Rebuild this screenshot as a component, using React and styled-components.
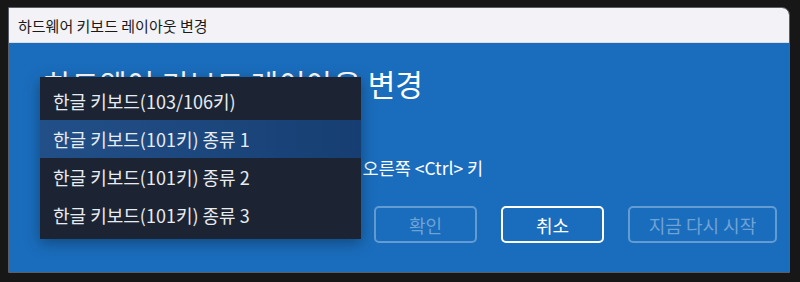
import React from "react";
import styled, { createGlobalStyle } from "styled-components";

const GlobalStyle = createGlobalStyle`
    html, body {
        margin: 0;
        padding: 0;
        background: #171717;
        font-family: "Noto Sans CJK KR", "Noto Sans", sans-serif;
    }
`;

const options = [
    "한글 키보드(103/106키)",
    "한글 키보드(101키) 종류 1",
    "한글 키보드(101키) 종류 2",
    "한글 키보드(101키) 종류 3",
];

const App = () => {
    return (
        <Page>
            <GlobalStyle />
            <Window>
                <TitleBar>하드웨어 키보드 레이아웃 변경</TitleBar>
                <Body>
                    <Heading>하드웨어 키보드 레이아웃 변경</Heading>
                    <InfoLine>한/영 키: 오른쪽 &lt;Alt&gt; 키, 한자 키: 오른쪽 &lt;Ctrl&gt; 키</InfoLine>
                    <Buttons>
                        <DialogButton disabled>확인</DialogButton>
                        <DialogButton primary>취소</DialogButton>
                        <DialogButton disabled wide>지금 다시 시작</DialogButton>
                    </Buttons>
                    <Popup>
                        {options.map((label, i) => (
                            <Option key={label} selected={i === 1}>{label}</Option>
                        ))}
                    </Popup>
                </Body>
            </Window>
        </Page>
    );
};

const Page = styled.div`
    width: 800px;
    height: 282px;
    padding: 7px 10px 9px 8px;
    box-sizing: border-box;
    background: #171717;
`;

const Window = styled.div`
    height: 100%;
    display: flex;
    flex-direction: column;
    border: 1px solid #5a5f66;
    border-radius: 0 8px 0 0;
    overflow: hidden;
    box-sizing: border-box;
`;

const TitleBar = styled.div`
    height: 34px;
    flex-shrink: 0;
    display: flex;
    align-items: center;
    padding-left: 9px;
    background: #f2f2f7;
    border-bottom: 1px solid #dcdde4;
    color: #1a1a1a;
    font-size: 15px;
`;

const Body = styled.div`
    position: relative;
    flex: 1;
    display: flex;
    flex-direction: column;
    padding: 20px 12px 0 35px;
    background: #1a6dbd;
    color: #ffffff;
`;

const Heading = styled.div`
    font-size: 30px;
    line-height: 40px;
`;

const InfoLine = styled.div`
    margin-top: 53px;
    padding-left: 67px;
    font-size: 17.5px;
    line-height: 24px;
`;

const Buttons = styled.div`
    display: flex;
    justify-content: flex-end;
    gap: 24px;
    margin-top: 26px;
`;

const DialogButton = styled.div`
    width: ${p => (p.wide ? "145px" : "99px")};
    height: 33px;
    display: flex;
    align-items: center;
    justify-content: center;
    border: 2px solid ${p => (p.primary ? "#ffffff" : "rgba(255, 255, 255, 0.32)")};
    border-radius: 5px;
    color: ${p => (p.primary ? "#ffffff" : "rgba(255, 255, 255, 0.38)")};
    font-size: 18px;
`;

const Popup = styled.div`
    position: absolute;
    top: 34px;
    left: 31px;
    width: 321px;
    padding: 5px 0;
    background: #1c2433;
    box-shadow: 0 4px 14px rgba(0, 0, 0, 0.35);
`;

const Option = styled.div`
    height: 38px;
    display: flex;
    align-items: center;
    padding-left: 13px;
    font-size: 18px;
    color: #e8ebf0;
    background: ${p => (p.selected ? "linear-gradient(90deg, #234f88 0%, #1b467c 60%, #163e72 100%)" : "transparent")};
`;

export default App;
